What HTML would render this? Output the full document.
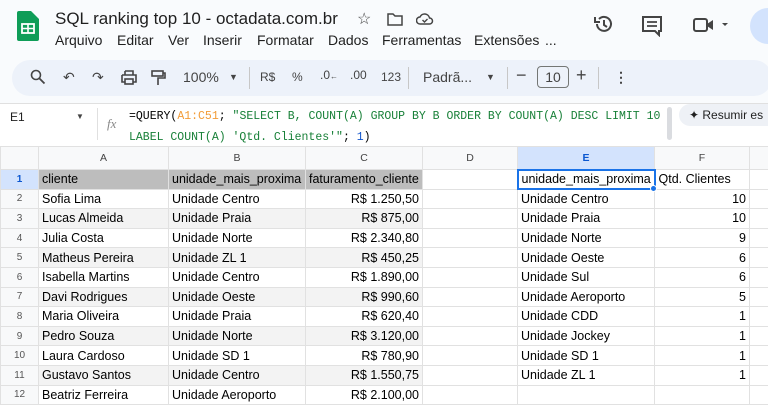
<!DOCTYPE html>
<html><head><meta charset="utf-8"><style>
*{box-sizing:border-box;margin:0;padding:0}
body{width:768px;height:403px;overflow:hidden;background:#f9fbfd;font-family:"Liberation Sans",sans-serif;position:relative;color:#1f1f1f}
.a{position:absolute}
.title{left:55px;top:9px;font-size:17px;color:#1f1f1f}
.menu{top:32px;font-size:14px;color:#1f1f1f}
.tb{left:12px;top:60px;width:760px;height:36px;background:#edf2fa;border-radius:18px}
.tbt{top:69px;font-size:14px;color:#444}
.fb{left:0;top:103px;width:768px;height:43px;background:#fff;border-top:1px solid #e0e0e0}
.code{font-family:"Liberation Mono",monospace;font-size:11.5px;color:#188038}
table{position:absolute;left:0;top:146px;width:779px;border-collapse:collapse;table-layout:fixed;background:#fff}
td{border:1px solid #e1e1e1;height:19.6px;font-size:12.5px;padding:0 3px;white-space:nowrap;overflow:hidden;color:#000}
td.h{background:#f8f9fa;color:#555;font-size:10px;text-align:center}
tr.ch td{height:23px;font-size:10.5px;background:#f8f9fa;color:#444;text-align:center}
.r{text-align:right}
.g td.d{background:#f3f3f3}
.hd td.d{background:#bdbdbd}
</style></head><body>
<svg class="a" style="left:17px;top:11px" width="22" height="30" viewBox="0 0 22 30"><path d="M2 0h12l8 8v20a2 2 0 0 1-2 2H2a2 2 0 0 1-2-2V2a2 2 0 0 1 2-2z" fill="#0f9d58"/><rect x="5" y="13" width="12" height="9" fill="none" stroke="#fff" stroke-width="1.8"/><path d="M5 17.5h12M11 13v9" stroke="#fff" stroke-width="1.6"/></svg>
<div class="a title">SQL ranking top 10 - octadata.com.br</div>
<div class="a" style="left:357px;top:9px;font-size:16px;color:#444">☆</div>
<svg class="a" style="left:387px;top:12px" width="16" height="14"><path d="M1 2h5l2 2h7v9H1z" fill="none" stroke="#444" stroke-width="1.5"/></svg>
<svg class="a" style="left:416px;top:12px" width="18" height="14"><path d="M4 12a3.5 3.5 0 0 1 0-7 5 5 0 0 1 9.5 1 3 3 0 0 1 0 6z" fill="none" stroke="#444" stroke-width="1.5"/><path d="M6.5 8l2 2 3-3" fill="none" stroke="#444" stroke-width="1.4"/></svg>
<div class="a menu" style="left:55px">Arquivo</div>
<div class="a menu" style="left:117px">Editar</div>
<div class="a menu" style="left:168px">Ver</div>
<div class="a menu" style="left:203px">Inserir</div>
<div class="a menu" style="left:257px">Formatar</div>
<div class="a menu" style="left:328px">Dados</div>
<div class="a menu" style="left:382px">Ferramentas</div>
<div class="a menu" style="left:474px">Extensões</div>
<div class="a menu" style="left:545px">...</div>
<svg class="a" style="left:593px;top:13px" width="22" height="22" viewBox="0 0 22 22"><path d="M4 11a7 7 0 1 0 2-5" fill="none" stroke="#444" stroke-width="2"/><path d="M2 4v5h5" fill="none" stroke="#444" stroke-width="2"/><path d="M11 7v5l3 2" fill="none" stroke="#444" stroke-width="2"/></svg>
<svg class="a" style="left:641px;top:15px" width="22" height="22"><path d="M2 2h18v14h-2v4l-4-4H2z" fill="none" stroke="#444" stroke-width="2"/><path d="M6 7h10M6 11h10" stroke="#444" stroke-width="1.8"/></svg>
<svg class="a" style="left:692px;top:16px" width="36" height="18"><rect x="2" y="3" width="13" height="12" rx="2" fill="none" stroke="#444" stroke-width="2"/><path d="M15 8l6-4v10l-6-4z" fill="#444"/><path d="M30 7l3 3 3-3z" fill="#444"/></svg>
<div class="a" style="left:750px;top:8px;width:36px;height:36px;border-radius:50%;background:#d3e3fd"></div>
<div class="a tb"></div>
<svg class="a" style="left:30px;top:69px" width="16" height="16"><circle cx="6" cy="6" r="4.5" fill="none" stroke="#444" stroke-width="1.6"/><path d="M9.5 9.5l5 5" stroke="#444" stroke-width="1.8"/></svg>
<div class="a tbt" style="left:63px">↶</div>
<div class="a tbt" style="left:92px">↷</div>
<svg class="a" style="left:121px;top:70px" width="16" height="15"><path d="M4 1h8v4M4 5V1M1 5h14v7h-3M4 12H1V5" fill="none" stroke="#444" stroke-width="1.6"/><rect x="4" y="9" width="8" height="5" fill="none" stroke="#444" stroke-width="1.6"/></svg>
<svg class="a" style="left:150px;top:70px" width="16" height="16"><rect x="2" y="1" width="11" height="5" fill="none" stroke="#444" stroke-width="1.6"/><path d="M13 3h2v5H8v7" fill="none" stroke="#444" stroke-width="1.6"/></svg>
<div class="a tbt" style="left:183px">100%</div>
<div class="a tbt" style="left:229px;font-size:9px;top:72px">▼</div>
<div class="a" style="left:249px;top:67px;width:1px;height:22px;background:#c7c7c7"></div>
<div class="a tbt" style="left:260px;font-size:12px;top:70px">R$</div>
<div class="a tbt" style="left:292px;font-size:12px;top:70px">%</div>
<div class="a tbt" style="left:320px;font-size:12px;top:68px">.0<span style="font-size:8px">←</span></div>
<div class="a tbt" style="left:350px;font-size:12px;top:68px">.00</div>
<div class="a tbt" style="left:381px;font-size:12px;top:70px">123</div>
<div class="a" style="left:408px;top:67px;width:1px;height:22px;background:#c7c7c7"></div>
<div class="a tbt" style="left:423px">Padrã...</div>
<div class="a tbt" style="left:486px;font-size:9px;top:72px">▼</div>
<div class="a" style="left:507px;top:67px;width:1px;height:22px;background:#c7c7c7"></div>
<div class="a tbt" style="left:516px;font-size:18px;top:65px">−</div>
<div class="a" style="left:537px;top:66px;width:32px;height:22px;border:1px solid #747775;border-radius:4px;font-size:14px;text-align:center;line-height:20px;color:#444">10</div>
<div class="a tbt" style="left:576px;font-size:18px;top:65px">+</div>
<div class="a" style="left:598px;top:67px;width:1px;height:22px;background:#c7c7c7"></div>
<div class="a tbt" style="left:614px;font-weight:bold">⋮</div>
<div class="a fb"></div>
<div class="a" style="left:10px;top:110px;font-size:12px">E1</div>
<div class="a" style="left:76px;top:112px;font-size:8px;color:#444">▼</div>
<div class="a" style="left:97px;top:108px;width:1px;height:32px;background:#e0e0e0"></div>
<div class="a" style="left:107px;top:116px;font-size:13px;font-style:italic;color:#888;font-family:'Liberation Serif',serif">fx</div>
<div class="a code" style="left:129px;top:110px"><span style="color:#000">=QUERY(</span><span style="color:#f29c38">A1:C51</span><span style="color:#000">; </span>"SELECT B, COUNT(A) GROUP BY B ORDER BY COUNT(A) DESC LIMIT 10</div>
<div class="a code" style="left:129px;top:131px">LABEL COUNT(A) 'Qtd. Clientes'"<span style="color:#000">; </span><span style="color:#1155cc">1</span><span style="color:#000">)</span></div>
<div class="a" style="left:667px;top:107px;width:5px;height:33px;background:#dadce0;border-radius:3px"></div>
<div class="a" style="left:679px;top:104px;width:100px;height:22px;background:#eef1f6;border-radius:11px;font-size:12px;line-height:22px;padding-left:10px">✦ Resumir es</div>
<table>
<colgroup><col style="width:38px"><col style="width:130px"><col style="width:137px"><col style="width:117px"><col style="width:95px"><col style="width:137px"><col style="width:95px"><col style="width:30px"></colgroup>
<tr class="ch"><td></td><td>A</td><td>B</td><td>C</td><td>D</td><td style="background:#d3e3fd;font-weight:bold;color:#0b57d0">E</td><td>F</td><td></td></tr>
<tr class="hd"><td class="h" style="background:#d3e3fd;color:#0b57d0;font-weight:bold">1</td><td class="d">cliente</td><td class="d">unidade_mais_proxima</td><td class="d">faturamento_cliente</td><td></td><td style="border:2px solid #1a73e8">unidade_mais_proxima</td><td>Qtd. Clientes</td><td></td></tr>
<tr><td class="h">2</td><td>Sofia Lima</td><td>Unidade Centro</td><td class="r">R$ 1.250,50</td><td></td><td>Unidade Centro</td><td class="r">10</td><td></td></tr>
<tr class="g"><td class="h">3</td><td class="d">Lucas Almeida</td><td class="d">Unidade Praia</td><td class="d r">R$ 875,00</td><td></td><td>Unidade Praia</td><td class="r">10</td><td></td></tr>
<tr><td class="h">4</td><td>Julia Costa</td><td>Unidade Norte</td><td class="r">R$ 2.340,80</td><td></td><td>Unidade Norte</td><td class="r">9</td><td></td></tr>
<tr class="g"><td class="h">5</td><td class="d">Matheus Pereira</td><td class="d">Unidade ZL 1</td><td class="d r">R$ 450,25</td><td></td><td>Unidade Oeste</td><td class="r">6</td><td></td></tr>
<tr><td class="h">6</td><td>Isabella Martins</td><td>Unidade Centro</td><td class="r">R$ 1.890,00</td><td></td><td>Unidade Sul</td><td class="r">6</td><td></td></tr>
<tr class="g"><td class="h">7</td><td class="d">Davi Rodrigues</td><td class="d">Unidade Oeste</td><td class="d r">R$ 990,60</td><td></td><td>Unidade Aeroporto</td><td class="r">5</td><td></td></tr>
<tr><td class="h">8</td><td>Maria Oliveira</td><td>Unidade Praia</td><td class="r">R$ 620,40</td><td></td><td>Unidade CDD</td><td class="r">1</td><td></td></tr>
<tr class="g"><td class="h">9</td><td class="d">Pedro Souza</td><td class="d">Unidade Norte</td><td class="d r">R$ 3.120,00</td><td></td><td>Unidade Jockey</td><td class="r">1</td><td></td></tr>
<tr><td class="h">10</td><td>Laura Cardoso</td><td>Unidade SD 1</td><td class="r">R$ 780,90</td><td></td><td>Unidade SD 1</td><td class="r">1</td><td></td></tr>
<tr class="g"><td class="h">11</td><td class="d">Gustavo Santos</td><td class="d">Unidade Centro</td><td class="d r">R$ 1.550,75</td><td></td><td>Unidade ZL 1</td><td class="r">1</td><td></td></tr>
<tr><td class="h">12</td><td>Beatriz Ferreira</td><td>Unidade Aeroporto</td><td class="r">R$ 2.100,00</td><td></td><td></td><td></td><td></td></tr>
</table>
<div class="a" style="left:650px;top:185px;width:7px;height:7px;border-radius:50%;background:#1a73e8;border:1px solid #fff"></div>
</body></html>
